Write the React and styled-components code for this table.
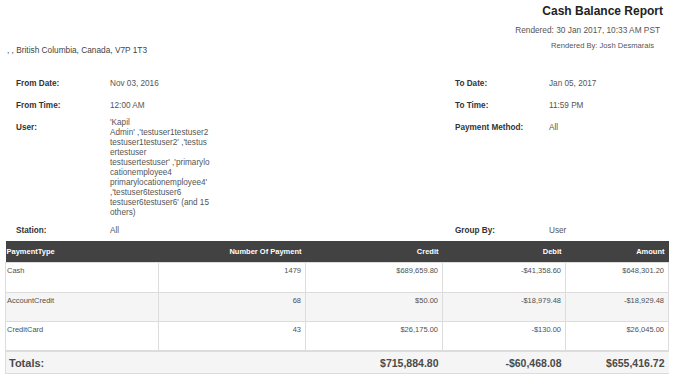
import React from "react";
import styled, { createGlobalStyle } from "styled-components";

const GlobalStyle = createGlobalStyle`
  html, body { margin: 0; padding: 0; background: #fff; }
  body { font-family: "Liberation Sans", Arial, sans-serif; }
  #root { width: 675px; }
`;

const Page = styled.div`
  width: 675px;
  box-sizing: border-box;
  padding: 4px 7px 6px 5px;
`;

const Header = styled.header`
  display: flex;
  justify-content: space-between;
  align-items: flex-end;
`;

const Address = styled.div`
  padding-left: 2px;
  font-size: 8.3px;
  line-height: 10px;
  color: #444;
`;

const TitleBlock = styled.div`
  display: flex;
  flex-direction: column;
  align-items: flex-end;
`;

const Title = styled.h1`
  margin: 0;
  padding-right: 5px;
  font-size: 12px;
  line-height: 15px;
  font-weight: bold;
  color: #222;
`;

const MetaLine = styled.div`
  margin-top: 6px;
  margin-bottom: ${(p) => p.$bottom || 0}px;
  padding-right: ${(p) => p.$inset}px;
  font-size: ${(p) => p.$size}px;
  line-height: 10px;
  color: #555;
`;

const Info = styled.div`
  display: grid;
  grid-template-columns: 94px 345px 94px 1fr;
  row-gap: 10px;
  margin-top: 23px;
  padding-left: 11px;
  font-size: 8.2px;
  line-height: 12px;
`;

const Label = styled.div`
  font-weight: bold;
  color: #333;
`;

const Value = styled.div`
  color: #555;
`;

const MultiValue = styled.div`
  margin: -4px 0 -3px;
  line-height: 10px;
  color: #555;
  span { display: block; white-space: nowrap; }
`;

const Table = styled.table`
  width: 663px;
  margin-top: 4px;
  border-collapse: collapse;
  table-layout: fixed;
`;

const HeadCell = styled.th`
  height: 21px;
  padding: 0 4px 0 1px;
  background: #424242;
  color: #fff;
  font-size: 7.5px;
  font-weight: bold;
  text-align: ${(p) => p.$align};
  vertical-align: middle;
`;

const BodyRow = styled.tr`
  height: 29.6px;
  background: ${(p) => (p.$shade ? "#f5f5f5" : "#fff")};
`;

const Cell = styled.td`
  padding: 3px 4px 0 1px;
  border: 1px solid #dcdcdc;
  color: #505050;
  font-size: 7.5px;
  line-height: 9px;
  text-align: ${(p) => p.$align};
  vertical-align: top;
`;

const TotalsRow = styled.tr`
  height: 22px;
  background: #f5f5f5;
  border-top: 2px solid #dcdcdc;
  border-bottom: 1px solid #dcdcdc;
  border-left: 1px solid #dcdcdc;
`;

const TotalCell = styled.td`
  padding: 0 4px 0 ${(p) => (p.$align === "left" ? 3 : 1)}px;
  color: #4a4a4a;
  font-size: ${(p) => (p.$align === "left" ? 11 : 10.5)}px;
  font-weight: bold;
  text-align: ${(p) => p.$align};
  vertical-align: middle;
`;

const columns = [
  { title: "PaymentType", width: 153, align: "left" },
  { title: "Number Of Payment", width: 147, align: "right" },
  { title: "Credit", width: 137, align: "right" },
  { title: "Debit", width: 123, align: "right" },
  { title: "Amount", width: 103, align: "right" },
];

const rows = [
  ["Cash", "1479", "$689,659.80", "-$41,358.60", "$648,301.20"],
  ["AccountCredit", "68", "$50.00", "-$18,979.48", "-$18,929.48"],
  ["CreditCard", "43", "$26,175.00", "-$130.00", "$26,045.00"],
];

const totals = ["Totals:", "", "$715,884.80", "-$60,468.08", "$655,416.72"];

const userLines = [
  "'Kapil",
  "Admin' ,'testuser1testuser2",
  "testuser1testuser2' ,'testus",
  "ertestuser",
  "testusertestuser' ,'primarylo",
  "cationemployee4",
  "primarylocationemployee4'",
  " ,'testuser6testuser6",
  "testuser6testuser6' (and 15",
  "others)",
];

export default function App() {
  return (
    <>
      <GlobalStyle />
      <Page>
        <Header>
          <Address>, , British Columbia, Canada, V7P 1T3</Address>
          <TitleBlock>
            <Title>Cash Balance Report</Title>
            <MetaLine $inset={8} $size={8.3}>
              Rendered: 30 Jan 2017, 10:33 AM PST
            </MetaLine>
            <MetaLine $inset={14} $size={7.6} $bottom={4}>
              Rendered By: Josh Desmarais
            </MetaLine>
          </TitleBlock>
        </Header>

        <Info>
          <Label>From Date:</Label>
          <Value>Nov 03, 2016</Value>
          <Label>To Date:</Label>
          <Value>Jan 05, 2017</Value>

          <Label>From Time:</Label>
          <Value>12:00 AM</Value>
          <Label>To Time:</Label>
          <Value>11:59 PM</Value>

          <Label>User:</Label>
          <MultiValue>
            {userLines.map((l, i) => (
              <span key={i}>{l}</span>
            ))}
          </MultiValue>
          <Label>Payment Method:</Label>
          <Value>All</Value>

          <Label>Station:</Label>
          <Value>All</Value>
          <Label>Group By:</Label>
          <Value>User</Value>
        </Info>

        <Table>
          <colgroup>
            {columns.map((c) => (
              <col key={c.title} style={{ width: c.width }} />
            ))}
          </colgroup>
          <thead>
            <tr>
              {columns.map((c) => (
                <HeadCell key={c.title} $align={c.align}>
                  {c.title}
                </HeadCell>
              ))}
            </tr>
          </thead>
          <tbody>
            {rows.map((r, i) => (
              <BodyRow key={r[0]} $shade={i % 2 === 1}>
                {r.map((v, j) => (
                  <Cell key={j} $align={columns[j].align}>
                    {v}
                  </Cell>
                ))}
              </BodyRow>
            ))}
            <TotalsRow>
              {totals.map((v, j) => (
                <TotalCell key={j} $align={columns[j].align}>
                  {v}
                </TotalCell>
              ))}
            </TotalsRow>
          </tbody>
        </Table>
      </Page>
    </>
  );
}
